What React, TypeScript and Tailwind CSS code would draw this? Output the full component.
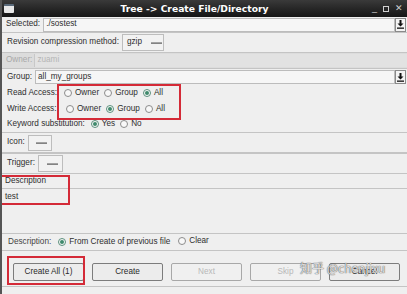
import React from "react";

const font = { fontFamily: '"Liberation Sans", Arial, sans-serif' };

function Radio({ on }: { on?: boolean }) {
  return (
    <span
      className={
        "inline-flex items-center justify-center w-[8px] h-[8px] rounded-full border bg-[#f8f8f8] " +
        (on ? "border-[#5b8f7c]" : "border-[#8c8c8c]")
      }
    >
      {on && <span className="w-[4px] h-[4px] rounded-full bg-[#3f8a6c]" />}
    </span>
  );
}

function RadioOpt({ on, label }: { on?: boolean; label: string }) {
  return (
    <span className="inline-flex items-center gap-[3px] mr-[5px]">
      <Radio on={on} />
      <span>{label}</span>
    </span>
  );
}

function DownBtn() {
  return (
    <div className="w-[11px] h-[14px] border border-[#8a8a8a] bg-[#f4f4f4] flex items-center justify-center shrink-0">
      <svg width="7" height="9" viewBox="0 0 7 9">
        <path d="M2.5 0h2v3.5h2l-3 3-3-3h2z" fill="#111" />
        <rect x="0" y="7.5" width="7" height="1.3" fill="#111" />
      </svg>
    </div>
  );
}

function Dash() {
  return (
    <svg width="11" height="4" viewBox="0 0 11 4">
      <rect x="0" y="1.5" width="11" height="1.2" fill="#555" />
    </svg>
  );
}

function Btn({ label, disabled }: { label: string; disabled?: boolean }) {
  return (
    <div
      className={
        "h-[18px] w-[71px] rounded-[2px] border flex items-center justify-center " +
        (disabled
          ? "border-[#a8a8a8] bg-[#f0f0f0] text-[#b8b8b8]"
          : "border-[#7c7c7c] bg-[#ececec] text-[#2a2a2a]")
      }
    >
      {label}
    </div>
  );
}

export default function App() {
  return (
    <div
      className="relative w-[407px] h-[294px] overflow-hidden bg-[#efefef] text-[8.2px] text-[#2e2e2e] flex flex-col border-l-2 border-[#555]"
      style={font}
    >
      {/* title bar */}
      <div className="h-[17px] shrink-0 bg-gradient-to-b from-[#3a3a3a] to-[#151515] flex items-center px-[2px] relative">
        <div className="w-[10px] h-[9px] bg-[#e8e8e8] rounded-[1px] border-t-2 border-[#5a6a7a]" />
        <div
          className="absolute left-[4px] right-[24px] text-center text-white font-bold text-[9.2px] leading-none"
          style={{ fontFamily: '"DejaVu Sans", sans-serif' }}
        >
          Tree -&gt; Create File/Directory
        </div>
        <div className="ml-auto flex items-center gap-[6px] text-[#cfcfcf] text-[9px] pr-[2px]">
          <span className="leading-none">_</span>
          <span className="w-[6px] h-[6px] border border-[#cfcfcf]" />
          <span className="leading-none">✕</span>
        </div>
      </div>

      {/* Selected */}
      <div className="h-[16px] shrink-0 flex items-center pl-[4px] pr-[1px] border-b border-[#c4c4c4]">
        <span className="mr-[3px]">Selected:</span>
        <div className="flex-1 h-[14px] bg-[#f6f6f6] border border-[#bcbcbc] flex items-center pl-[2px]">
          ./sostest
        </div>
        <DownBtn />
      </div>

      {/* Revision */}
      <div className="h-[20px] shrink-0 flex items-center pl-[5px] border-b border-[#c4c4c4]">
        <span className="mr-[3px]">Revision compression method:</span>
        <div className="h-[17px] w-[42px] border border-[#bdbdbd] bg-[#f2f2f2] flex items-center pl-[4px] gap-[9px]">
          <span>gzip</span>
          <Dash />
        </div>
      </div>

      {/* Owner (disabled) */}
      <div className="h-[16px] shrink-0 flex items-center pl-[4px] bg-[#dcdcdc] border-b border-[#c4c4c4] text-[#a9a9a9]">
        <span className="mr-[2px]">Owner:</span>
        <div className="flex-1 h-[13px] bg-[#e2e2e2] border-l border-[#c8c8c8] flex items-center pl-[2px] text-[#b5b5b5]">
          zuami
        </div>
      </div>

      {/* Group */}
      <div className="h-[16px] shrink-0 flex items-center pl-[5px] pr-[1px]">
        <span className="mr-[3px]">Group:</span>
        <div className="flex-1 h-[14px] bg-[#f6f6f6] border border-[#bcbcbc] flex items-center pl-[2px]">
          all_my_groups
        </div>
        <DownBtn />
      </div>

      {/* Read access */}
      <div className="h-[16px] shrink-0 flex items-center pl-[5px]">
        <span className="w-[57px]">Read Access:</span>
        <RadioOpt label="Owner" />
        <RadioOpt label="Group" />
        <RadioOpt label="All" on />
      </div>
      {/* Write access */}
      <div className="h-[16px] shrink-0 flex items-center pl-[5px]">
        <span className="w-[59px]">Write Access:</span>
        <RadioOpt label="Owner" />
        <RadioOpt label="Group" on />
        <RadioOpt label="All" />
      </div>
      {/* Keyword */}
      <div className="h-[16px] shrink-0 flex items-center pl-[5px] border-b border-[#c4c4c4]">
        <span className="mr-[6px]">Keyword substitution:</span>
        <RadioOpt label="Yes" on />
        <RadioOpt label="No" />
      </div>

      {/* Icon */}
      <div className="h-[21px] shrink-0 flex items-center pl-[5px] border-b-2 border-[#c4c4c4]">
        <span className="mr-[3px]">Icon:</span>
        <div className="h-[16px] w-[24px] border border-[#bdbdbd] bg-[#f2f2f2] flex items-center justify-end pr-[4px]">
          <Dash />
        </div>
      </div>

      {/* Trigger */}
      <div className="h-[20px] shrink-0 flex items-center pl-[5px] border-b border-[#c4c4c4]">
        <span className="mr-[3px]">Trigger:</span>
        <div className="h-[17px] w-[25px] border border-[#bdbdbd] bg-[#f2f2f2] flex items-center justify-end pr-[4px]">
          <Dash />
        </div>
      </div>

      {/* Description label */}
      <div className="h-[15px] shrink-0 flex items-center pl-[3px] border-b border-[#c4c4c4]">
        Description
      </div>

      {/* Text area */}
      <div className="h-[45px] shrink-0 pl-[3px] pt-[2px] border-b border-[#c4c4c4] bg-[#efefef]">
        test
      </div>

      {/* Description radio */}
      <div className="h-[17px] shrink-0 flex items-center pl-[6px] border-b border-[#c4c4c4]">
        <span className="mr-[7px] text-[#444]">Description:</span>
        <RadioOpt label="From Create of previous file" on />
        <span className="ml-[3px]">
          <RadioOpt label="Clear" />
        </span>
      </div>

      {/* Buttons */}
      <div className="h-[36px] shrink-0 flex items-center pl-[11px] pt-[7px] gap-[8px] border-b border-[#c4c4c4]">
        <Btn label="Create All (1)" />
        <Btn label="Create" />
        <Btn label="Next" disabled />
        <Btn label="Skip" disabled />
        <Btn label="Cancel" />
      </div>

      {/* annotation boxes */}
      <div className="absolute left-[55px] top-[84px] w-[124px] h-[36px] border-2 border-[#d42a37]" />
      <div className="absolute left-[-2px] top-[175px] w-[70px] h-[30px] border-2 border-[#d42a37]" />
      <div className="absolute left-[5px] top-[256px] w-[78px] h-[29px] border-2 border-[#d42a37]" />

      {/* watermark */}
      <div
        className="absolute left-[298px] top-[262px] text-[12px] leading-none text-white/80"
        style={{
          fontFamily: '"Noto Sans CJK SC", "Liberation Sans", sans-serif',
          textShadow: "0 0 1px #555, 0 0 1px #555",
        }}
      >
        知乎 @chenjixu
      </div>
    </div>
  );
}
